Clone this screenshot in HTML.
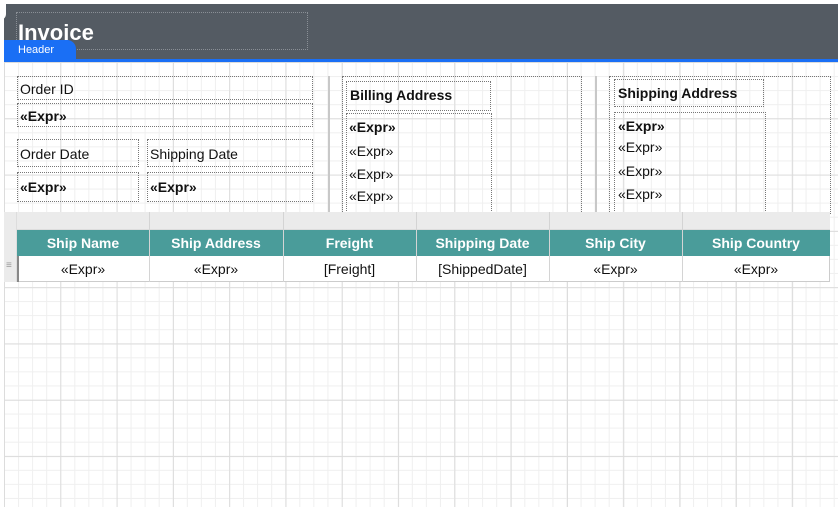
<!DOCTYPE html>
<html><head><style>
*{margin:0;padding:0;box-sizing:border-box}
body{width:838px;height:507px;overflow:hidden;background:#fff;font-family:"Liberation Sans",Arial,sans-serif;position:relative}
.grid{position:absolute;left:4px;top:62px;width:834px;height:445px;
background-image:
linear-gradient(to right,#dcdcdc 1px,transparent 1px),
linear-gradient(to bottom,#dcdcdc 1px,transparent 1px),
linear-gradient(to right,#efefef 1px,transparent 1px),
linear-gradient(to bottom,#efefef 1px,transparent 1px);
background-size:56.3px 56.3px,56.3px 56.3px,14.07px 14.07px,14.07px 14.07px;}
.a{position:absolute}
.d{position:absolute;border:1px dotted #777}
.t{position:absolute;font-size:14px;color:#111;white-space:nowrap}
.b{font-weight:bold}
</style></head><body>
<div class="grid"></div>
<div class="a" style="left:0;top:0;width:838px;height:4px;background:#fff"></div>
<div class="a" style="left:4px;top:4px;width:834px;height:56px;background:#545b63"></div>
<div class="a" style="left:0;top:0;width:6px;height:20px;border-radius:0 0 6px 0;background:#fff"></div>
<div class="a" style="left:16px;top:12px;width:292px;height:38px;border:1px dotted #8a8f96"></div>
<div class="t b" style="left:18px;top:20px;font-size:22px;color:#fff">Invoice</div>
<div class="a" style="left:4px;top:40px;width:72px;height:20px;background:#1a6ff5;border-radius:0 9px 0 0"></div>
<div class="t" style="left:18px;top:44px;font-size:11px;color:#fff">Header</div>
<div class="a" style="left:4px;top:59px;width:834px;height:3px;background:#1a6ff5"></div>

<div class="d" style="left:17px;top:76px;width:296px;height:24px"></div>
<div class="t" style="left:20px;top:81px">Order ID</div>
<div class="d" style="left:17px;top:103px;width:296px;height:24px"></div>
<div class="t b" style="left:20px;top:108px">«Expr»</div>
<div class="d" style="left:17px;top:139px;width:122px;height:28px"></div>
<div class="t" style="left:20px;top:146px">Order Date</div>
<div class="d" style="left:147px;top:139px;width:166px;height:28px"></div>
<div class="t" style="left:150px;top:146px">Shipping Date</div>
<div class="d" style="left:17px;top:172px;width:122px;height:30px"></div>
<div class="t b" style="left:20px;top:179px">«Expr»</div>
<div class="d" style="left:147px;top:172px;width:166px;height:30px"></div>
<div class="t b" style="left:150px;top:179px">«Expr»</div>

<div class="a" style="left:328px;top:76px;width:2px;height:136px;background:#c8c8c8"></div>
<div class="d" style="left:342px;top:76px;width:240px;height:138px"></div>
<div class="d" style="left:346px;top:81px;width:145px;height:30px"></div>
<div class="t b" style="left:350px;top:87px">Billing Address</div>
<div class="d" style="left:346px;top:113px;width:146px;height:100px"></div>
<div class="t b" style="left:349px;top:119px">«Expr»</div>
<div class="t" style="left:349px;top:143px">«Expr»</div>
<div class="t" style="left:349px;top:166px">«Expr»</div>
<div class="t" style="left:349px;top:188px">«Expr»</div>

<div class="a" style="left:595px;top:76px;width:2px;height:136px;background:#c8c8c8"></div>
<div class="d" style="left:609px;top:76px;width:222px;height:138px"></div>
<div class="d" style="left:614px;top:79px;width:150px;height:28px"></div>
<div class="t b" style="left:618px;top:85px">Shipping Address</div>
<div class="d" style="left:614px;top:112px;width:152px;height:101px"></div>
<div class="t b" style="left:618px;top:118px">«Expr»</div>
<div class="t" style="left:618px;top:139px">«Expr»</div>
<div class="t" style="left:618px;top:163px">«Expr»</div>
<div class="t" style="left:618px;top:186px">«Expr»</div>

<div class="a" style="left:4px;top:212px;width:826px;height:70px;background:#fff"></div>
<div class="a" style="left:4px;top:212px;width:826px;height:18px;background:#ebebeb;border-bottom:1px solid #ddd"></div>
<div class="a" style="left:4px;top:212px;width:13px;height:70px;background:#ebebeb;border-right:1px solid #ddd"></div>
<div class="t" style="left:6px;top:260px;font-size:10px;color:#999">≡</div>
<div class="a" style="left:17px;top:230px;width:813px;height:26px;background:#4a9c9a"></div>
<div class="a" style="left:17px;top:256px;width:813px;height:26px;border:1px solid #ccc;border-top:none"></div>
<div class="a" style="left:17px;top:256px;width:2px;height:26px;background:#888"></div>
<div id="cols"></div>
<script>
var xs=[17,149,283,416,549,682,830];
var h=["Ship Name","Ship Address","Freight","Shipping Date","Ship City","Ship Country"];
var v=["«Expr»","«Expr»","[Freight]","[ShippedDate]","«Expr»","«Expr»"];
var s="";
for(var i=0;i<6;i++){var l=xs[i],w=xs[i+1]-xs[i];
if(i>0)s+='<div class="a" style="left:'+l+'px;top:212px;width:1px;height:70px;background:#d4d4d4"></div>';
s+='<div class="t b" style="left:'+l+'px;top:235px;width:'+w+'px;text-align:center;color:#fff">'+h[i]+'</div>';
s+='<div class="t" style="left:'+l+'px;top:261px;width:'+w+'px;text-align:center">'+v[i]+'</div>';}
document.getElementById("cols").innerHTML=s;
</script>
</body></html>
